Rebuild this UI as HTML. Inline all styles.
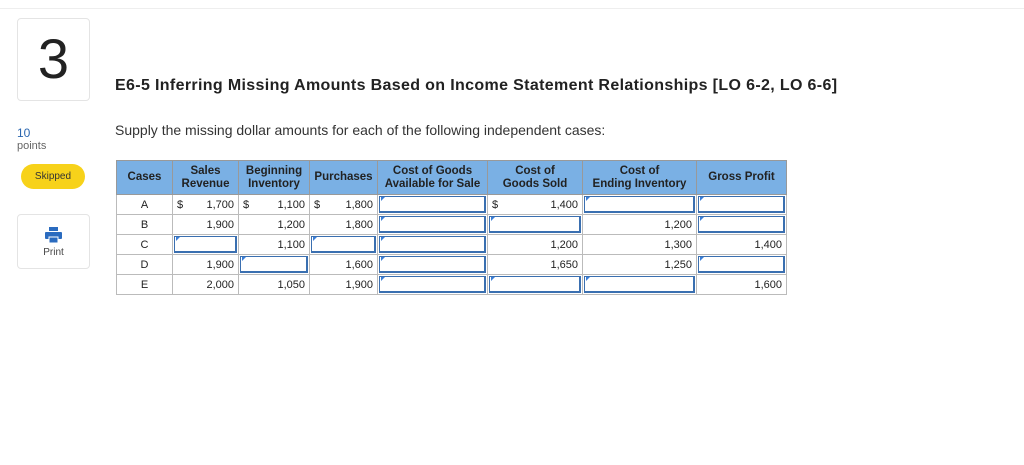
<!DOCTYPE html>
<html><head><meta charset="utf-8"><style>
body{margin:0;width:1024px;height:465px;background:#fff;font-family:"Liberation Sans",sans-serif;position:relative;overflow:hidden}
.a{position:absolute}
.topline{left:0;top:8px;width:1024px;height:1px;background:#eee}
.num{left:17px;top:18px;width:71px;height:81px;border:1px solid #e4e4e4;border-radius:4px;font-size:56px;text-align:center;line-height:80px;color:#222;font-weight:300}
.title{left:115px;top:77px;font-size:16px;letter-spacing:0.35px;font-weight:bold;color:#222;white-space:nowrap}
.sub{left:115px;top:122px;font-size:14px;color:#333;white-space:nowrap}
.pts{left:17px;top:126px;font-size:12px;color:#2a66b0}
.pts2{left:17px;top:140px;font-size:11px;color:#666}
.skip{left:21px;top:164px;width:64px;height:25px;background:#f7d21a;border-radius:13px;font-size:10px;text-align:center;line-height:25px;color:#333}
.print{left:17px;top:214px;width:71px;height:53px;border:1px solid #e4e4e4;border-radius:4px}
table{position:absolute;left:116px;top:160px;border-collapse:collapse;font-size:11px;color:#222}
th{background:#7ab0e4;border:1px solid #999;font-weight:bold;color:#222;line-height:13px;height:33px;padding:0;font-size:11.5px}
td{border:1px solid #bbb;height:19px;padding:0 4px;text-align:right;position:relative}
td.c{text-align:center}
td.in{padding:0}
td.in div{position:absolute;left:1px;top:1px;right:1px;bottom:1px;border:2px solid #3a6fb0;border-top-width:1px;border-left-width:1px;background:#fff}
td.in div:before{content:"";position:absolute;left:1px;top:0;border-left:4px solid #3a7ed8;border-bottom:4px solid transparent}
.d{float:left}
</style></head><body>
<div class="a topline"></div>
<div class="a num">3</div>
<div class="a title">E6-5 Inferring Missing Amounts Based on Income Statement Relationships [LO 6-2, LO 6-6]</div>
<div class="a sub">Supply the missing dollar amounts for each of the following independent cases:</div>
<div class="a pts">10</div><div class="a pts2">points</div>
<div class="a skip">Skipped</div>
<div class="a print">
<svg class="a" style="left:27px;top:12px" width="17" height="16" viewBox="0 0 17 16"><rect x="4" y="0" width="9" height="4" fill="#2a6bbf"/><rect x="0" y="5" width="17" height="7" rx="1" fill="#2a6bbf"/><rect x="4" y="10" width="9" height="6" fill="#2a6bbf" stroke="#fff" stroke-width="1"/></svg>
<div class="a" style="left:0;width:71px;top:32px;text-align:center;font-size:10px;color:#444">Print</div>
</div>
<table>
<tr><th style="width:55px">Cases</th><th style="width:65px">Sales<br>Revenue</th><th style="width:70px">Beginning<br>Inventory</th><th style="width:67px">Purchases</th><th style="width:109px">Cost of Goods<br>Available for Sale</th><th style="width:94px">Cost of<br>Goods Sold</th><th style="width:113px">Cost of<br>Ending Inventory</th><th style="width:89px">Gross Profit</th></tr>
<tr><td class="c">A</td><td><span class="d">$</span>1,700</td><td><span class="d">$</span>1,100</td><td><span class="d">$</span>1,800</td><td class="in"><div></div></td><td><span class="d">$</span>1,400</td><td class="in"><div></div></td><td class="in"><div></div></td></tr>
<tr><td class="c">B</td><td>1,900</td><td>1,200</td><td>1,800</td><td class="in"><div></div></td><td class="in"><div></div></td><td>1,200</td><td class="in"><div></div></td></tr>
<tr><td class="c">C</td><td class="in"><div></div></td><td>1,100</td><td class="in"><div></div></td><td class="in"><div></div></td><td>1,200</td><td>1,300</td><td>1,400</td></tr>
<tr><td class="c">D</td><td>1,900</td><td class="in"><div></div></td><td>1,600</td><td class="in"><div></div></td><td>1,650</td><td>1,250</td><td class="in"><div></div></td></tr>
<tr><td class="c">E</td><td>2,000</td><td>1,050</td><td>1,900</td><td class="in"><div></div></td><td class="in"><div></div></td><td class="in"><div></div></td><td>1,600</td></tr>
</table>
</body></html>
